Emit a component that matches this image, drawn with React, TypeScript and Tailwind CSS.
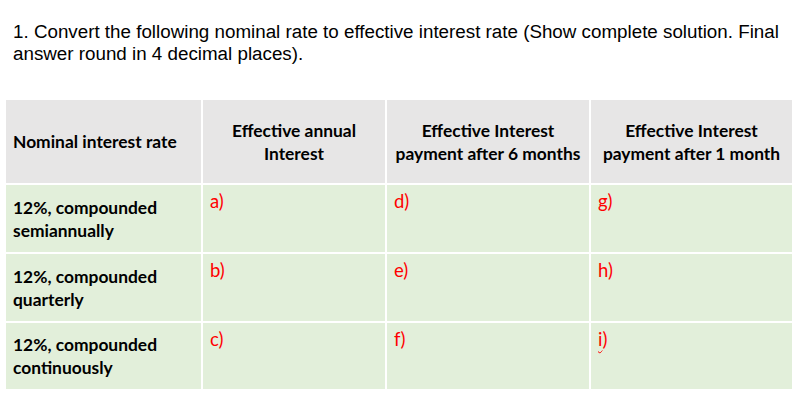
import { Fragment } from 'react';

const headers = [
  { text: 'Nominal interest rate', lines: ['Nominal interest rate'], align: 'left' },
  { text: 'Effective annual Interest', lines: ['Effective annual', 'Interest'], align: 'center' },
  { text: 'Effective Interest payment after 6 months', lines: ['Effective Interest', 'payment after 6 months'], align: 'center' },
  { text: 'Effective Interest payment after 1 month', lines: ['Effective Interest', 'payment after 1 month'], align: 'center' },
];

const rows = [
  { label: ['12%, compounded', 'semiannually'], answers: ['a)', 'd)', 'g)'] },
  { label: ['12%, compounded', 'quarterly'], answers: ['b)', 'e)', 'h)'] },
  { label: ['12%, compounded', 'continuously'], answers: ['c)', 'f)', 'i)'] },
];

const App = () => {
  return (
    <div className="w-[811px] h-[400px] bg-white overflow-hidden">
      <p className="pl-[13px] pt-[21px] pr-[2px] text-[18.8px] leading-[22px] text-black font-['Liberation_Sans',Arial,sans-serif]">
        1. Convert the following nominal rate to effective interest rate (Show complete solution. Final answer round in 4 decimal places).
      </p>

      <div className="mt-[35px] ml-[6px] grid grid-cols-[195px_182px_202px_201px] grid-rows-[83px_67px_67px_66px] gap-[2px] font-['Lato','Open_Sans',sans-serif] text-[17.4px] leading-[23px]">
        {headers.map(h => (
          <div
            key={h.text}
            className={
              h.align === 'left'
                ? 'bg-[#e7e6e6] flex items-center pl-[7px] font-bold text-black'
                : 'bg-[#e7e6e6] flex flex-col items-center justify-center text-center font-bold text-black'
            }
          >
            {h.lines.map(l => (
              <span key={l}>{l}</span>
            ))}
          </div>
        ))}

        {rows.map(r => (
          <Fragment key={r.label.join()}>
            <div className="bg-[#e2efda] flex flex-col justify-center pl-[7px] font-bold text-black">
              {r.label.map(l => (
                <span key={l}>{l}</span>
              ))}
            </div>
            {r.answers.map(a => (
              <div key={a} className="bg-[#e2efda] pl-[7px] pt-[5px] text-[#ff0000] text-[18.5px]">
                {a === 'i)' ? (
                  <span>
                    <span className="underline decoration-wavy decoration-[#ff0000] decoration-1 underline-offset-[3px]">i</span>)
                  </span>
                ) : (
                  a
                )}
              </div>
            ))}
          </Fragment>
        ))}
      </div>
    </div>
  );
};

export default App;
